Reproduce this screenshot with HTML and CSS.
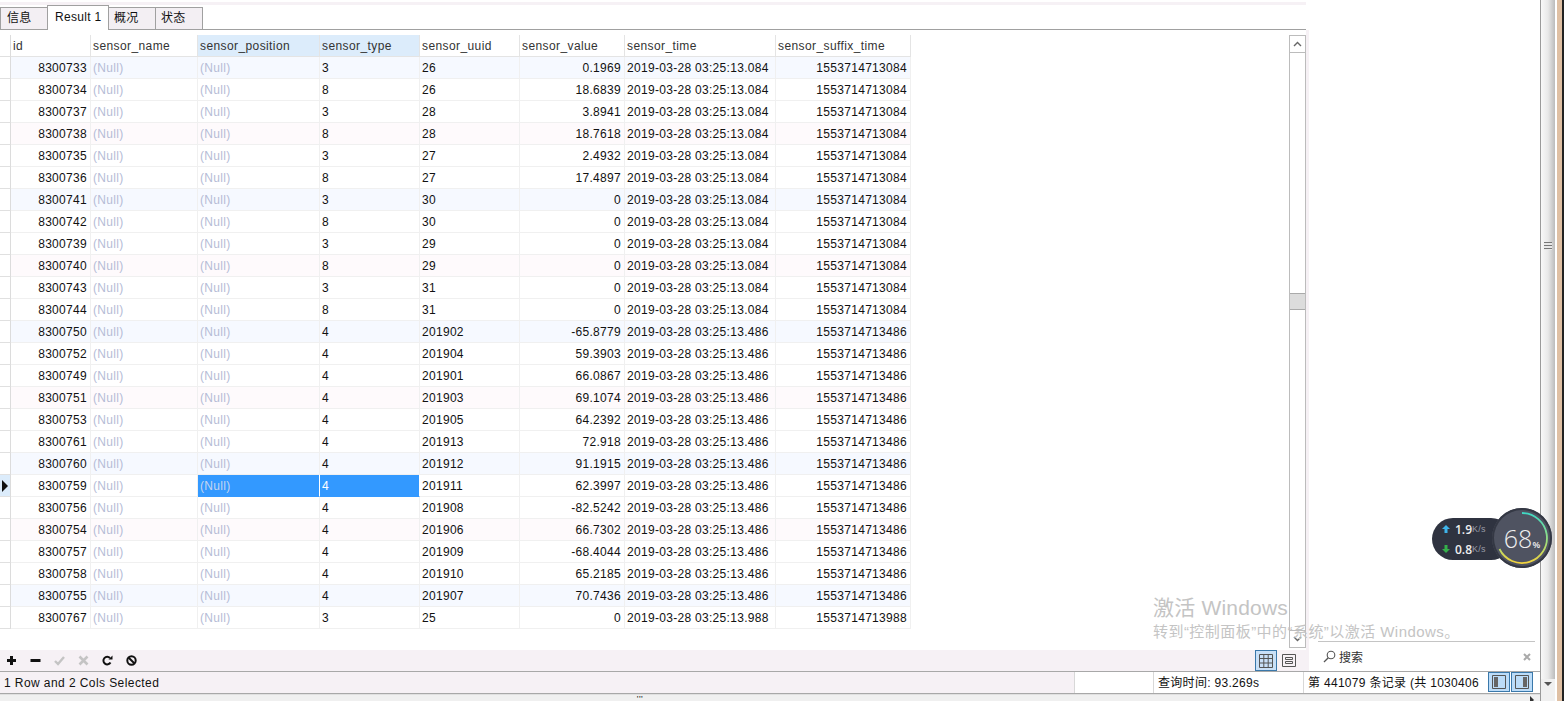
FILE: index.html
```html
<!doctype html>
<html>
	<head>
		<title>Result 1</title>
		<meta charset="UTF-8">
		<link rel="stylesheet" href="styles.css">
	</head>
	<body>
		<div class="app">
			<div class="upper">
				<div class="main">
					<div class="topband"></div>
					<div class="tabs">
						<span class="tab">信息</span>
						<span class="tab active">Result 1</span>
						<span class="tab">概况</span>
						<span class="tab">状态</span>
					</div>
					<div class="gridwrap">
						<div class="gridarea">
							<table class="grid">
								<colgroup>
									<col class="c-gut"><col class="c-id"><col class="c-name"><col class="c-pos"><col class="c-type"><col class="c-uuid"><col class="c-val"><col class="c-time"><col class="c-suf">
								</colgroup>
								<thead>
									<tr><th class="gut"></th><th>id</th><th>sensor_name</th><th class="hl">sensor_position</th><th class="hl">sensor_type</th><th>sensor_uuid</th><th>sensor_value</th><th>sensor_time</th><th>sensor_suffix_time</th></tr>
								</thead>
								<tbody>
									<tr class="blue"><td class="gut"></td><td class="num">8300733</td><td class="nul">(Null)</td><td class="nul">(Null)</td><td>3</td><td>26</td><td class="num">0.1969</td><td>2019-03-28 03:25:13.084</td><td class="num">1553714713084</td></tr>
									<tr><td class="gut"></td><td class="num">8300734</td><td class="nul">(Null)</td><td class="nul">(Null)</td><td>8</td><td>26</td><td class="num">18.6839</td><td>2019-03-28 03:25:13.084</td><td class="num">1553714713084</td></tr>
									<tr><td class="gut"></td><td class="num">8300737</td><td class="nul">(Null)</td><td class="nul">(Null)</td><td>3</td><td>28</td><td class="num">3.8941</td><td>2019-03-28 03:25:13.084</td><td class="num">1553714713084</td></tr>
									<tr class="pink"><td class="gut"></td><td class="num">8300738</td><td class="nul">(Null)</td><td class="nul">(Null)</td><td>8</td><td>28</td><td class="num">18.7618</td><td>2019-03-28 03:25:13.084</td><td class="num">1553714713084</td></tr>
									<tr><td class="gut"></td><td class="num">8300735</td><td class="nul">(Null)</td><td class="nul">(Null)</td><td>3</td><td>27</td><td class="num">2.4932</td><td>2019-03-28 03:25:13.084</td><td class="num">1553714713084</td></tr>
									<tr><td class="gut"></td><td class="num">8300736</td><td class="nul">(Null)</td><td class="nul">(Null)</td><td>8</td><td>27</td><td class="num">17.4897</td><td>2019-03-28 03:25:13.084</td><td class="num">1553714713084</td></tr>
									<tr class="blue"><td class="gut"></td><td class="num">8300741</td><td class="nul">(Null)</td><td class="nul">(Null)</td><td>3</td><td>30</td><td class="num">0</td><td>2019-03-28 03:25:13.084</td><td class="num">1553714713084</td></tr>
									<tr><td class="gut"></td><td class="num">8300742</td><td class="nul">(Null)</td><td class="nul">(Null)</td><td>8</td><td>30</td><td class="num">0</td><td>2019-03-28 03:25:13.084</td><td class="num">1553714713084</td></tr>
									<tr><td class="gut"></td><td class="num">8300739</td><td class="nul">(Null)</td><td class="nul">(Null)</td><td>3</td><td>29</td><td class="num">0</td><td>2019-03-28 03:25:13.084</td><td class="num">1553714713084</td></tr>
									<tr class="pink"><td class="gut"></td><td class="num">8300740</td><td class="nul">(Null)</td><td class="nul">(Null)</td><td>8</td><td>29</td><td class="num">0</td><td>2019-03-28 03:25:13.084</td><td class="num">1553714713084</td></tr>
									<tr><td class="gut"></td><td class="num">8300743</td><td class="nul">(Null)</td><td class="nul">(Null)</td><td>3</td><td>31</td><td class="num">0</td><td>2019-03-28 03:25:13.084</td><td class="num">1553714713084</td></tr>
									<tr><td class="gut"></td><td class="num">8300744</td><td class="nul">(Null)</td><td class="nul">(Null)</td><td>8</td><td>31</td><td class="num">0</td><td>2019-03-28 03:25:13.084</td><td class="num">1553714713084</td></tr>
									<tr class="blue"><td class="gut"></td><td class="num">8300750</td><td class="nul">(Null)</td><td class="nul">(Null)</td><td>4</td><td>201902</td><td class="num">-65.8779</td><td>2019-03-28 03:25:13.486</td><td class="num">1553714713486</td></tr>
									<tr><td class="gut"></td><td class="num">8300752</td><td class="nul">(Null)</td><td class="nul">(Null)</td><td>4</td><td>201904</td><td class="num">59.3903</td><td>2019-03-28 03:25:13.486</td><td class="num">1553714713486</td></tr>
									<tr><td class="gut"></td><td class="num">8300749</td><td class="nul">(Null)</td><td class="nul">(Null)</td><td>4</td><td>201901</td><td class="num">66.0867</td><td>2019-03-28 03:25:13.486</td><td class="num">1553714713486</td></tr>
									<tr class="pink"><td class="gut"></td><td class="num">8300751</td><td class="nul">(Null)</td><td class="nul">(Null)</td><td>4</td><td>201903</td><td class="num">69.1074</td><td>2019-03-28 03:25:13.486</td><td class="num">1553714713486</td></tr>
									<tr><td class="gut"></td><td class="num">8300753</td><td class="nul">(Null)</td><td class="nul">(Null)</td><td>4</td><td>201905</td><td class="num">64.2392</td><td>2019-03-28 03:25:13.486</td><td class="num">1553714713486</td></tr>
									<tr><td class="gut"></td><td class="num">8300761</td><td class="nul">(Null)</td><td class="nul">(Null)</td><td>4</td><td>201913</td><td class="num">72.918</td><td>2019-03-28 03:25:13.486</td><td class="num">1553714713486</td></tr>
									<tr class="blue"><td class="gut"></td><td class="num">8300760</td><td class="nul">(Null)</td><td class="nul">(Null)</td><td>4</td><td>201912</td><td class="num">91.1915</td><td>2019-03-28 03:25:13.486</td><td class="num">1553714713486</td></tr>
									<tr><td class="gut cur"><span class="arrow"></span></td><td class="num">8300759</td><td class="nul">(Null)</td><td class="nul sel">(Null)</td><td class="sel">4</td><td>201911</td><td class="num">62.3997</td><td>2019-03-28 03:25:13.486</td><td class="num">1553714713486</td></tr>
									<tr><td class="gut"></td><td class="num">8300756</td><td class="nul">(Null)</td><td class="nul">(Null)</td><td>4</td><td>201908</td><td class="num">-82.5242</td><td>2019-03-28 03:25:13.486</td><td class="num">1553714713486</td></tr>
									<tr class="pink"><td class="gut"></td><td class="num">8300754</td><td class="nul">(Null)</td><td class="nul">(Null)</td><td>4</td><td>201906</td><td class="num">66.7302</td><td>2019-03-28 03:25:13.486</td><td class="num">1553714713486</td></tr>
									<tr><td class="gut"></td><td class="num">8300757</td><td class="nul">(Null)</td><td class="nul">(Null)</td><td>4</td><td>201909</td><td class="num">-68.4044</td><td>2019-03-28 03:25:13.486</td><td class="num">1553714713486</td></tr>
									<tr><td class="gut"></td><td class="num">8300758</td><td class="nul">(Null)</td><td class="nul">(Null)</td><td>4</td><td>201910</td><td class="num">65.2185</td><td>2019-03-28 03:25:13.486</td><td class="num">1553714713486</td></tr>
									<tr class="blue"><td class="gut"></td><td class="num">8300755</td><td class="nul">(Null)</td><td class="nul">(Null)</td><td>4</td><td>201907</td><td class="num">70.7436</td><td>2019-03-28 03:25:13.486</td><td class="num">1553714713486</td></tr>
									<tr><td class="gut"></td><td class="num">8300767</td><td class="nul">(Null)</td><td class="nul">(Null)</td><td>3</td><td>25</td><td class="num">0</td><td>2019-03-28 03:25:13.988</td><td class="num">1553714713988</td></tr>
								</tbody>
							</table>
							<div class="vscroll">
								<div class="vbtn"><svg width="9" height="6" viewBox="0 0 9 6"><path d="M1 5L4.5 1.5L8 5" fill="none" stroke="#666" stroke-width="1.4"/></svg></div>
								<div class="vtrack"><div class="vthumb"></div></div>
								<div class="vbtn"><svg width="9" height="6" viewBox="0 0 9 6"><path d="M1 1L4.5 4.5L8 1" fill="none" stroke="#666" stroke-width="1.4"/></svg></div>
							</div>
						</div>
					</div>
					<div class="toolbar">
						<div class="tools">
							<svg width="11" height="11" viewBox="0 0 11 11"><path d="M4 1h3v3h3v3H7v3H4V7H1V4h3z" fill="#111"/></svg>
							<svg width="11" height="11" viewBox="0 0 11 11"><path d="M0.500 4h10v3h-10z" fill="#111"/></svg>
							<svg width="11" height="11" viewBox="0 0 11 11"><path d="M1 6l3 3 6-7" fill="none" stroke="#c4c4c4" stroke-width="2.400"/></svg>
							<svg width="11" height="11" viewBox="0 0 11 11"><path d="M1.500 1.500l8 8M9.500 1.500l-8 8" stroke="#c4c4c4" stroke-width="2.600"/></svg>
							<svg width="11" height="11" viewBox="0 0 11 11"><path d="M8.500 7.500A3.800 3.800 0 1 1 8 3" fill="none" stroke="#111" stroke-width="2"/><path d="M6.500 4.500h4v-4z" fill="#111"/></svg>
							<svg width="11" height="11" viewBox="0 0 11 11"><circle cx="5.500" cy="5.500" r="4.200" fill="none" stroke="#111" stroke-width="2"/><path d="M2.500 2.500l6 6" stroke="#111" stroke-width="2"/></svg>
						</div>
						<div class="views">
							<span class="viewbtn on"><svg width="14" height="14" viewBox="0 0 14 14"><path d="M.5.500h13v13H.500zM.5 4.500h13M.5 9h13M4.800.500v13M9.200.500v13" fill="none" stroke="#555"/></svg></span>
							<span class="viewbtn"><svg width="14" height="13" viewBox="0 0 14 13"><path d="M.5.500h13v12H.500z" fill="none" stroke="#555"/><path d="M3.500 3.500h7v2h-7zM3.500 7.500h7v2h-7z" fill="none" stroke="#555"/></svg></span>
						</div>
					</div>
				</div>
				<div class="side">
					<div class="search">
						<svg width="13" height="13" viewBox="0 0 13 13"><circle cx="8" cy="5" r="3.800" fill="none" stroke="#555" stroke-width="1.100"/><path d="M5.300 7.700L1 12" stroke="#555" stroke-width="1.300"/></svg>
						<span class="searchtext">搜索</span>
						<svg class="searchx" width="8" height="8" viewBox="0 0 8 8"><path d="M1 1l6 6M7 1l-6 6" stroke="#aaa" stroke-width="2"/></svg>
					</div>
				</div>
			</div>
			<div class="status">
				<div class="st st-main">1 Row and 2 Cols Selected</div>
				<div class="st st-blank"></div>
				<div class="st st-time">查询时间: 93.269s</div>
				<div class="st st-rec">第 441079 条记录 (共 1030406</div>
				<div class="st st-btns">
					<span class="panebtn"><svg width="14" height="14" viewBox="0 0 14 14"><path d="M.5.500h13v13H.500z" fill="none" stroke="#555"/><path d="M2 2h4v10H2z" fill="#666"/></svg></span>
					<span class="panebtn"><svg width="14" height="14" viewBox="0 0 14 14"><path d="M.5.500h13v13H.500z" fill="none" stroke="#555"/><path d="M8 2h4v10H8z" fill="#666"/></svg></span>
				</div>
			</div>
			<div class="foot"><span class="grip">'''</span><span class="footarrow"></span></div>
		</div>
		<div class="pagescroll">
			<div class="pagebar"><div class="pagegrip"></div></div>
			<div class="pagedown"></div>
		</div>
		<div class="edge"></div>

		<div class="watermark">
			<div class="wm1">激活 Windows</div>
			<div class="wm2">转到“控制面板”中的“系统”以激活 Windows。</div>
		</div>

		<div class="net">
			<div class="netpill">
				<div class="netrow"><svg width="8" height="8" viewBox="0 0 8 8"><path d="M4 0L8 4H5.500V8H2.500V4H0z" fill="#3fb4ea"/></svg><b>1.9</b><i>K/s</i></div>
				<div class="netrow"><svg width="8" height="8" viewBox="0 0 8 8"><path d="M4 8L8 4H5.500V0H2.500V4H0z" fill="#35b04a"/></svg><b>0.8</b><i>K/s</i></div>
			</div>
			<div class="netring">
				<svg width="60" height="60" viewBox="0 0 60 60">
					<defs><linearGradient id="ringcol" x1="0" y1="0" x2="0" y2="1"><stop offset="0" stop-color="#3fd8c4"/><stop offset=".55" stop-color="#9adf80"/><stop offset="1" stop-color="#f2d23c"/></linearGradient></defs>
					<path d="M30 5A25 25 0 1 1 7.500 41" fill="none" stroke="url(#ringcol)" stroke-width="1.800"/>
				</svg>
				<span class="pct">68<small>%</small></span>
			</div>
		</div>
	</body>
</html>
```

FILE: styles.css
```css
html, body {
	margin: 0;
	height: 701px;
	overflow: hidden;
}
body {
	position: relative;
	display: flex;
	background: white;
	font-family: "Liberation Sans", "Noto Sans CJK SC", sans-serif;
	font-size: 12px;
	letter-spacing: 0.3px;
	color: #111;
}
.app {
	width: 1540px;
	display: flex;
	flex-direction: column;
}
.upper {
	height: 671px;
	display: flex;
}
.main {
	width: 1309px;
	display: flex;
	flex-direction: column;
}
.topband {
	height: 3px;
	margin-top: 2px;
	margin-right: 3px;
	background: #f6f1f5;
}
.tabs {
	height: 24px;
	display: flex;
	align-items: flex-end;
	margin-right: 3px;
	border-bottom: 1px solid #a0a0a0;
}
.tab {
	width: 41px;
	height: 21px;
	line-height: 21px;
	padding-left: 5px;
	background: #f3eff3;
	border: 1px solid #a0a0a0;
	border-bottom: none;
	margin-left: -1px;
}
.tab:first-child {
	margin-left: 0;
	width: 40px;
	padding-left: 6px;
}
.tab.active {
	width: 53px;
	height: 24px;
	line-height: 22px;
	padding-left: 7px;
	margin-bottom: -1px;
	background: white;
}
.gridwrap {
	flex: 1;
	padding-top: 5px;
	border-right: 3px solid #f6f1f5;
	min-height: 0;
}
.gridarea {
	height: 615px;
	display: flex;
	justify-content: space-between;
}
.grid {
	table-layout: fixed;
	border-collapse: separate;
	border-spacing: 0;
	width: 911px;
	height: 594px;
}
.c-gut { width: 11px; }
.c-id { width: 80px; }
.c-name { width: 107px; }
.c-pos { width: 122px; }
.c-type { width: 100px; }
.c-uuid { width: 100px; }
.c-val { width: 105px; }
.c-time { width: 151px; }
.c-suf { width: 135px; }
.grid th, .grid td {
	height: 21px;
	padding: 0 0 0 2px;
	border-right: 1px solid #f0f0f0;
	border-bottom: 1px solid #f0f0f0;
	white-space: nowrap;
	overflow: hidden;
	text-align: left;
	font-weight: normal;
	box-sizing: content-box;
}
.grid th {
	color: #333;
	letter-spacing: 0.4px;
	border-bottom-color: #e4e4e4;
	border-right-color: #e4e4e4;
}
.grid th.hl {
	background: #dcecfb;
}
.grid .gut {
	padding: 0;
	background: white;
	border-right: 1px solid #dcdcdc;
	border-bottom-color: #e0e0e0;
}
.grid .gut.cur {
	background: #dcecfb;
}
.arrow {
	display: block;
	margin-left: 2px;
	width: 0;
	height: 0;
	border-left: 6px solid #111;
	border-top: 6px solid transparent;
	border-bottom: 6px solid transparent;
}
.grid td.num {
	text-align: right;
	padding: 0 3px 0 0;
}
.grid td.nul {
	color: #b5bcd6;
}
.blue td {
	background: #f6f9ff;
}
.pink td {
	background: #fefafc;
}
.grid td.sel {
	background: #3399ff;
	color: white;
	border-right-color: white;
	border-bottom-color: #3399ff;
}
.grid td.sel.nul {
	color: #c5d5ef;
}
.vscroll {
	width: 17px;
	height: 613px;
	display: flex;
	flex-direction: column;
	border: 1px solid #bcbcbc;
	box-sizing: border-box;
}
.vbtn {
	height: 16px;
	display: flex;
	align-items: center;
	justify-content: center;
	flex: none;
}
.vtrack {
	flex: 1;
	border-top: 1px solid #bcbcbc;
	border-bottom: 1px solid #bcbcbc;
	padding-top: 240px;
}
.vthumb {
	height: 15px;
	background: #dcdcdc;
	border-top: 1px solid #aaa;
	border-bottom: 1px solid #aaa;
}
.toolbar {
	height: 21px;
	display: flex;
	justify-content: space-between;
	align-items: center;
	background: #f6f1f5;
	padding: 0 9px 0 6px;
}
.tools {
	display: flex;
	gap: 13px;
}
.views {
	display: flex;
	gap: 1px;
	align-items: center;
}
.viewbtn {
	width: 22px;
	height: 21px;
	display: flex;
	align-items: center;
	justify-content: center;
	box-sizing: border-box;
	border: 1px solid transparent;
}
.viewbtn.on {
	background: #c9e0f7;
	border-color: #3a78aa;
}
.side {
	flex: 1;
	display: flex;
	flex-direction: column;
	justify-content: flex-end;
}
.search {
	height: 29px;
	margin: 0 5px 0 9px;
	padding: 0 4px 0 5px;
	border-top: 1px solid #c4c4c4;
	display: flex;
	align-items: center;
	gap: 3px;
	color: #333;
}
.searchtext {
	flex: 1;
	letter-spacing: 0;
}
.status {
	height: 21px;
	display: flex;
	border-top: 1px solid #a8a8a8;
	border-bottom: 1px solid #a8a8a8;
}
.st {
	line-height: 20px;
	white-space: nowrap;
	overflow: hidden;
	border-right: 1px solid #d8d8d8;
	box-sizing: border-box;
}
.st-main {
	width: 1075px;
	padding-left: 4px;
	line-height: 22px;
	letter-spacing: 0.42px;
	background: #f6f1f5;
}
.st-blank {
	width: 79px;
}
.st-time {
	width: 150px;
	padding-left: 4px;
	line-height: 22px;
}
.st-rec {
	width: 184px;
	padding-left: 4px;
	line-height: 22px;
	border-right: none;
}
.st-btns {
	flex: 1;
	display: flex;
	gap: 1px;
	border-right: none;
}
.panebtn {
	width: 22px;
	height: 20px;
	display: flex;
	align-items: center;
	justify-content: center;
	background: #bcdcf8;
	border: 1px solid #3a78aa;
	box-sizing: border-box;
}
.foot {
	flex: 1;
	background: #f0f0f0;
	display: flex;
	justify-content: center;
	position: relative;
	border-top: 1px solid #e0e0e0;
}
.grip {
	line-height: 7px;
	font-size: 7px;
	font-weight: bold;
	letter-spacing: 0.5px;
	color: #333;
	margin-right: 260px;
}
.footarrow {
	position: absolute;
	right: 6px;
	top: 1px;
	width: 0;
	height: 0;
	border-left: 4px solid #333;
	border-top: 4px solid transparent;
	border-bottom: 4px solid transparent;
}
.pagescroll {
	width: 15px;
	display: flex;
	flex-direction: column;
	border-left: 1px solid #9a9a9a;
	box-sizing: border-box;
}
.pagebar {
	height: 679px;
	background: linear-gradient(to right, #f8f8f8, #e8e8e8 50%, #bcbcbc);
	display: flex;
	align-items: center;
	justify-content: center;
	padding-bottom: 188px;
	box-sizing: border-box;
}
.pagegrip {
	width: 8px;
	height: 8px;
	background: repeating-linear-gradient(to bottom, #777 0, #777 1px, #e8e8e8 1px, #e8e8e8 3px);
}
.pagedown {
	flex: 1;
	background: #f0f0f0;
	position: relative;
}
.pagedown::after {
	content: "";
	position: absolute;
	left: 3px;
	top: 3px;
	border-top: 4px solid #555;
	border-left: 4px solid transparent;
	border-right: 4px solid transparent;
}
.edge {
	flex: 1;
	border-left: 2px solid white;
	background: #dfc0a4;
	border-right: 2px solid #222;
}
.watermark {
	position: absolute;
	left: 1153px;
	top: 594px;
	color: #c4c4c4;
	letter-spacing: 0;
	pointer-events: none;
}
.wm1 {
	font-size: 21px;
	letter-spacing: 0.2px;
	line-height: 27px;
}
.wm2 {
	font-size: 15px;
	letter-spacing: 0.45px;
	line-height: 20px;
	margin-top: 1px;
}
.net {
	position: absolute;
	left: 1432px;
	top: 508px;
	width: 120px;
	height: 60px;
}
.netpill {
	position: absolute;
	left: 0;
	top: 10px;
	width: 80px;
	height: 42px;
	border-radius: 21px;
	background: #2f3340;
	color: #eee;
	padding: 1px 0 0 10px;
	box-sizing: border-box;
}
.netrow {
	height: 20px;
	display: flex;
	align-items: center;
	gap: 5px;
}
.netrow b {
	font-family: "Open Sans", sans-serif;
	font-size: 12px;
	font-weight: 600;
	letter-spacing: 0;
}
.netrow i {
	font-style: normal;
	font-size: 9px;
	color: #9a9ca8;
	margin-left: -5px;
}
.netring {
	position: absolute;
	left: 60px;
	top: 0;
	width: 60px;
	height: 60px;
	border-radius: 50%;
	background: #4f5361;
	box-shadow: inset 0 0 0 2px #343844;
}
.netring svg {
	position: absolute;
	left: 0;
	top: 0;
}
.pct {
	position: absolute;
	left: 0;
	right: 0;
	top: 15px;
	text-align: center;
	font-family: "Open Sans", sans-serif;
	font-size: 25px;
	line-height: 30px;
	letter-spacing: 0;
	font-weight: 300;
	color: #f0f0f0;
}
.pct small {
	font-size: 9px;
	font-weight: 600;
}
```
